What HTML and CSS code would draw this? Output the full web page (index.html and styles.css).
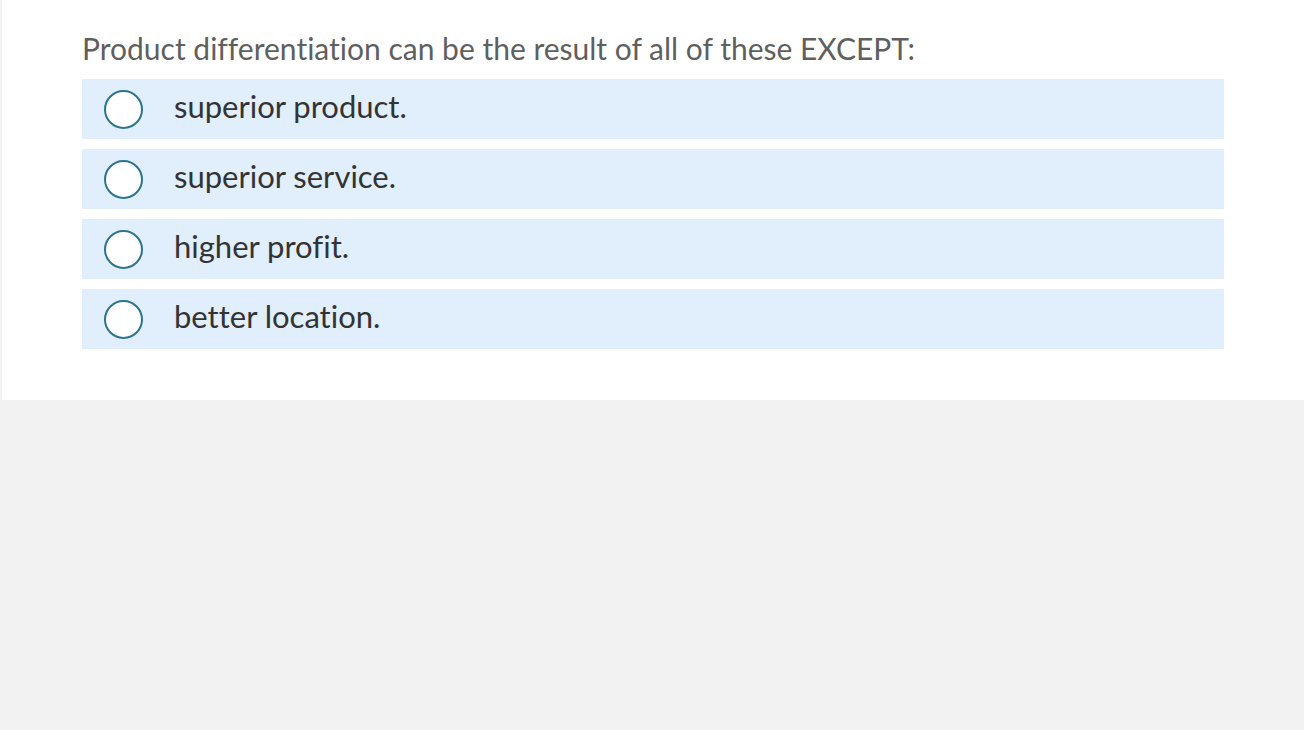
FILE: index.html
```html
<!DOCTYPE html>
<html lang="en">
<head>
<meta charset="utf-8">
<title>Question</title>
<link rel="stylesheet" href="styles.css">
</head>
<body>
<div class="card">
  <div class="question">Product differentiation can be the result of all of these EXCEPT:</div>
  <div class="options">
    <label class="option"><span class="radio"></span><span class="text">superior product.</span></label>
    <label class="option"><span class="radio"></span><span class="text">superior service.</span></label>
    <label class="option"><span class="radio"></span><span class="text">higher profit.</span></label>
    <label class="option"><span class="radio"></span><span class="text">better location.</span></label>
  </div>
</div>
</body>
</html>
```
FILE: styles.css
```css
html, body {
  margin: 0;
  padding: 0;
  background: #f2f2f2;
  font-family: Lato, "Source Sans Pro", "Noto Sans", sans-serif;
  font-variant-ligatures: none;
}
.card {
  background: #ffffff;
  margin-left: 2px;
  height: 400px;
  box-sizing: border-box;
  padding: 28px 80px 0 80px;
  box-shadow: 0 1px 0 #dcdcdc, 0 2px 0 #e6e6e6;
}
.question {
  font-size: 30px;
  line-height: 40px;
  color: #5f5f5f;
  margin-bottom: 11px;
  white-space: nowrap;
}
.options {
  display: flex;
  flex-direction: column;
  gap: 10px;
}
.option {
  display: flex;
  align-items: center;
  height: 60px;
  background: #e1eefc;
  padding-left: 22px;
}
.radio {
  width: 39px;
  height: 39px;
  box-sizing: border-box;
  border: 2px solid #2a7391;
  border-radius: 50%;
  background: #ffffff;
  flex: none;
}
.text {
  margin-left: 31px;
  margin-bottom: 6px;
  font-size: 31px;
  color: #333333;
  line-height: 40px;
}
```
